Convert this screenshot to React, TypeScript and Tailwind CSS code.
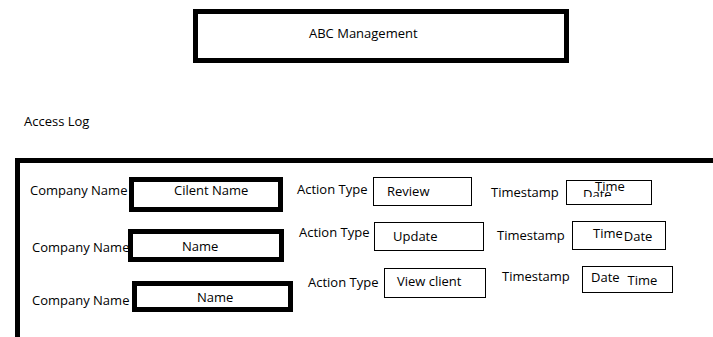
import React from 'react';

export default function App() {
  return (
    <div className="h-[337px] w-[713px] overflow-hidden bg-white font-['Open_Sans',sans-serif] text-[13px] leading-[16px] text-black flex flex-col">
      {/* Title box */}
      <div className="ml-[193px] mt-[9px] h-[54px] w-[376px] shrink-0 border-[5px] border-black pl-[111px] pt-[11px]">
        ABC Management
      </div>

      <div className="ml-[24px] mt-[50px]">Access Log</div>

      {/* Log panel */}
      <div className="ml-[15px] mt-[29px] flex-1 border-l-[5px] border-t-[5px] border-black">
        {/* Row 1 */}
        <div className="flex h-[57px] items-start whitespace-nowrap">
          <span className="ml-[10px] mt-[19px] w-[99px] shrink-0">Company Name</span>
          <div className="mt-[14px] h-[35px] w-[154px] shrink-0 border-[5px] border-black pl-[40px]">Cilent Name</div>
          <span className="ml-[14px] mt-[18px] w-[76px] shrink-0">Action Type</span>
          <div className="mt-[14px] h-[29px] w-[99px] shrink-0 border border-black pl-[13px] pt-[5px]">Review</div>
          <span className="ml-[19px] mt-[21px] w-[75px] shrink-0">Timestamp</span>
          <div className="mt-[17px] h-[25px] w-[86px] shrink-0 border border-black">
            <div className="relative z-10 -mt-[3px] ml-[28px] w-fit">Time</div>
            <div className="-mt-[8px] ml-[16px] h-[11px] w-fit overflow-hidden">Date</div>
          </div>
        </div>

        {/* Row 2 */}
        <div className="flex h-[44px] items-start whitespace-nowrap">
          <span className="ml-[12px] mt-[19px] w-[96px] shrink-0">Company Name</span>
          <div className="mt-[9px] h-[33px] w-[156px] shrink-0 border-[5px] border-black pl-[49px] pt-[4px]">Name</div>
          <span className="ml-[15px] mt-[4px] w-[75px] shrink-0">Action Type</span>
          <div className="mt-[2px] h-[29px] w-[110px] shrink-0 border border-black pl-[18px] pt-[5px]">Update</div>
          <span className="ml-[13px] mt-[7px] w-[75px] shrink-0">Timestamp</span>
          <div className="mt-[1px] flex h-[29px] w-[94px] shrink-0 items-start border border-black pl-[20px]">
            <span className="mt-[3px]">Time</span>
            <span className="ml-[1px] mt-[6px]">Date</span>
          </div>
        </div>

        {/* Row 3 */}
        <div className="flex items-start whitespace-nowrap">
          <span className="ml-[12px] mt-[28px] w-[100px] shrink-0">Company Name</span>
          <div className="mt-[17px] h-[31px] w-[161px] shrink-0 border-[5px] border-black pl-[60px] pt-[3px]">Name</div>
          <span className="ml-[15px] mt-[10px] w-[76px] shrink-0">Action Type</span>
          <div className="mt-[4px] h-[30px] w-[102px] shrink-0 border border-black pl-[12px] pt-[4px]">View client</div>
          <span className="ml-[16px] mt-[4px] w-[80px] shrink-0">Timestamp</span>
          <div className="mt-[2px] flex h-[27px] w-[91px] shrink-0 items-start border border-black pl-[8px]">
            <span className="mt-[2px]">Date</span>
            <span className="ml-[8px] mt-[5px]">Time</span>
          </div>
        </div>
      </div>
    </div>
  );
}
